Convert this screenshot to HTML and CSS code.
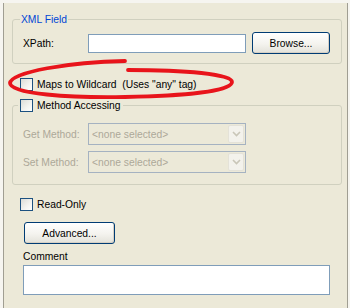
FILE: index.html
```html
<!DOCTYPE html>
<html>
<head>
<meta charset="utf-8">
<link rel="stylesheet" href="styles.css">
</head>
<body>
<div class="frame">
  <div class="group group-xml">
    <div class="legend legend-title">XML Field</div>
    <div class="row">
      <span class="label">XPath:</span>
      <div class="textbox"></div>
      <div class="button browse">Browse...</div>
    </div>
  </div>

  <div class="check-row wildcard">
    <span class="checkbox"></span>
    <span class="check-label">Maps to Wildcard&nbsp; (Uses "any" tag)</span>
  </div>

  <div class="group group-method">
    <div class="legend legend-check">
      <span class="checkbox"></span>
      <span class="check-label">Method Accessing</span>
    </div>
    <div class="row row-get">
      <span class="label disabled">Get Method:</span>
      <div class="combo">
        <span class="combo-text">&lt;none selected&gt;</span>
        <span class="combo-btn"><svg width="9" height="6" viewBox="0 0 9 6"><path d="M1 1 L4.5 4.5 L8 1" fill="none" stroke="#C9C6B8" stroke-width="1.6"/></svg></span>
      </div>
    </div>
    <div class="row row-set">
      <span class="label disabled">Set Method:</span>
      <div class="combo">
        <span class="combo-text">&lt;none selected&gt;</span>
        <span class="combo-btn"><svg width="9" height="6" viewBox="0 0 9 6"><path d="M1 1 L4.5 4.5 L8 1" fill="none" stroke="#C9C6B8" stroke-width="1.6"/></svg></span>
      </div>
    </div>
  </div>

  <div class="check-row readonly">
    <span class="checkbox"></span>
    <span class="check-label">Read-Only</span>
  </div>

  <div class="button advanced">Advanced...</div>

  <div class="comment-label">Comment</div>
  <div class="textarea"></div>

  <svg class="annotation" width="350" height="308" viewBox="0 0 350 308">
    <path d="M125 61 C70 62 11 72 10 83 C10 94 70 98 125 97 C185 96 232 91 232 82 C232 74 185 70 128 70" fill="none" stroke="#E8141B" stroke-width="3.8" stroke-linecap="round"/>
  </svg>
</div>
</body>
</html>
```

FILE: styles.css
```css
html, body {
  margin: 0;
  padding: 0;
}
body {
  width: 350px;
  height: 308px;
  overflow: hidden;
  background: #F6F5F0;
  font-family: "Liberation Sans", Arial, sans-serif;
  font-size: 10.3px;
  color: #000;
}
.frame {
  position: relative;
  margin: 3px 2px 0 3px;
  height: 305px;
  background: #ECE9D8;
  border-left: 1px solid #A09E92;
  border-right: 1px solid #A09E92;
  box-sizing: border-box;
  display: flex;
  flex-direction: column;
  align-items: flex-start;
}
.group {
  margin-left: 8px;
  width: 330px;
  box-sizing: border-box;
  border: 1px solid #D0D0BF;
  border-radius: 3px;
  display: flex;
  flex-direction: column;
  align-items: flex-start;
}
.group-xml {
  margin-top: 16px;
  padding-bottom: 9px;
}
.legend {
  background: #ECE9D8;
  line-height: 13px;
  height: 13px;
}
.legend-title {
  margin: -7px 0 0 7px;
  padding: 0 1px;
  color: #0046D5;
}
.legend-check {
  margin: -7px 0 0 5px;
  padding: 0 2px;
  display: flex;
  align-items: center;
  gap: 4px;
}
.row {
  display: flex;
  align-items: center;
  padding-left: 10px;
}
.group-xml .row {
  margin-top: 6px;
  height: 22px;
}
.label {
  width: 65px;
  line-height: 13px;
}
.label.disabled {
  color: #ACA899;
}
.textbox {
  width: 158px;
  height: 19px;
  box-sizing: border-box;
  border: 1px solid #7F9DB9;
  background: #fff;
}
.button {
  box-sizing: border-box;
  height: 22px;
  border: 1px solid #003C74;
  border-radius: 3px;
  background: linear-gradient(#FFFFFF 0%, #F4F3EE 55%, #E3E2DA 100%);
  box-shadow: inset -1px -1px 0 #D6D0C5;
  display: flex;
  align-items: center;
  justify-content: center;
  line-height: 13px;
}
.browse {
  width: 78px;
  margin-left: 6px;
}
.check-row {
  display: flex;
  align-items: center;
  gap: 4px;
  margin-left: 16px;
  height: 13px;
  line-height: 13px;
}
.wildcard {
  margin-top: 14px;
}
.checkbox {
  display: block;
  width: 13px;
  height: 13px;
  box-sizing: border-box;
  border: 1px solid #1C5180;
  background: linear-gradient(135deg, #DCDCD7 0%, #F4F4F0 60%, #FFFFFF 100%);
  flex: none;
}
.group-method {
  margin-top: 14px;
  padding-bottom: 11px;
}
.row-get {
  margin-top: 11px;
}
.row-set {
  margin-top: 6px;
}
.combo {
  width: 158px;
  height: 22px;
  box-sizing: border-box;
  border: 1px solid #A5B2C1;
  background: #ECE9D8;
  display: flex;
  align-items: center;
  justify-content: space-between;
  padding: 1px;
}
.combo-text {
  color: #ACA899;
  padding-left: 2px;
  line-height: 13px;
}
.combo-btn {
  width: 16px;
  height: 18px;
  box-sizing: border-box;
  border: 1px solid #E4E2D8;
  border-radius: 2px;
  background: #F3F2EC;
  display: flex;
  align-items: center;
  justify-content: center;
}
.readonly {
  margin-top: 13px;
}
.advanced {
  width: 91px;
  margin-left: 20px;
  margin-top: 11px;
}
.comment-label {
  margin-left: 19px;
  margin-top: 6px;
  line-height: 13px;
}
.textarea {
  margin-left: 19px;
  margin-top: 2px;
  width: 307px;
  height: 30px;
  box-sizing: border-box;
  border: 1px solid #7F9DB9;
  background: #fff;
}
.annotation {
  position: absolute;
  left: -4px;
  top: -3px;
  pointer-events: none;
}
```
